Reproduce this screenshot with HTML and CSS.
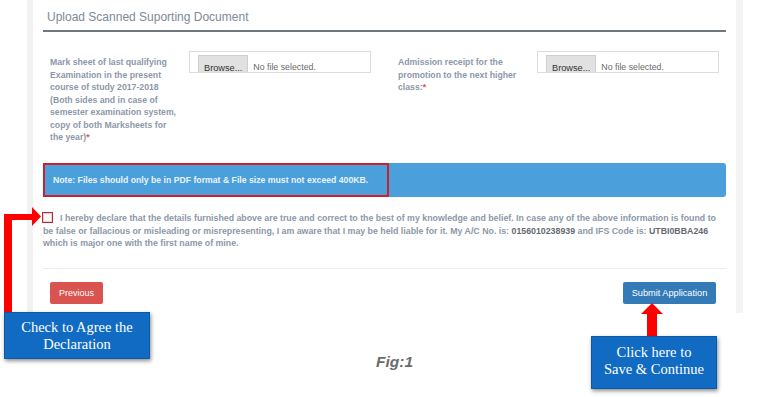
FILE: index.html
```html
<!DOCTYPE html>
<html>
<head>
<meta charset="utf-8">
<link rel="stylesheet" href="styles.css">
</head>
<body>
<div class="page">
  <div class="panel">
    <h3 class="title">Upload Scanned Suporting Document</h3>
    <div class="row">
      <label class="lbl lbl1">Mark sheet of last qualifying<br>Examination in the present<br>course of study 2017-2018<br>(Both sides and in case of<br>semester examination system,<br>copy of both Marksheets for<br>the year)<span class="req">*</span></label>
      <div class="file"><span class="browse">Browse...</span><span class="nofile">No file selected.</span></div>
      <label class="lbl lbl2">Admission receipt for the<br>promotion to the next higher<br>class:<span class="req">*</span></label>
      <div class="file"><span class="browse">Browse...</span><span class="nofile">No file selected.</span></div>
    </div>
    <div class="note"><div class="note-hl">Note: Files should only be in PDF format &amp; File size must not exceed 400KB.</div></div>
    <div class="decl"><span class="chk"></span>I hereby declare that the details furnished above are true and correct to the best of my knowledge and belief. In case any of the above information is found to<br>be false or fallacious or misleading or misrepresenting, I am aware that I may be held liable for it. My A/C No. is: <b>0156010238939</b> and IFS Code is: <b>UTBI0BBA246</b><br>which is major one with the first name of mine.</div>
    <div class="sep"></div>
    <div class="actions">
      <button class="btn btn-prev">Previous</button>
      <button class="btn btn-submit">Submit Application</button>
    </div>
  </div>
  <div class="caption">Fig:1</div>

  <svg class="arrows" width="768" height="397" viewBox="0 0 768 397">
    <path d="M4 214 H32 V207 L41 216.5 L32 226 V220 H12 V312 H4 Z" fill="#ff0000"/>
    <path d="M652 303 L663 314 H657 V336 H647 V314 H641 Z" fill="#ff0000"/>
  </svg>
  <div class="callout callout-left">Check to Agree the<br>Declaration</div>
  <div class="callout callout-right">Click here to<br>Save &amp; Continue</div>
</div>
</body>
</html>
```

FILE: styles.css
```css
* { box-sizing: border-box; }
html, body { margin: 0; padding: 0; background: #ffffff; }
body { font-family: "Liberation Sans", Arial, sans-serif; }

.page {
  position: relative;
  width: 768px;
  height: 397px;
  overflow: hidden;
}

.panel {
  margin-left: 27px;
  width: 716px;
  height: 313px;
  border-left: 6px solid #f2f2f2;
  border-right: 7px solid #f4f4f4;
  padding: 0 10px;
  background: #ffffff;
}

.title {
  margin: 0;
  padding: 9px 0 5px 4px;
  font-size: 12px;
  line-height: 16px;
  font-weight: normal;
  color: #7d8a98;
  border-bottom: 2px solid #6e7881;
}

.row {
  display: flex;
  align-items: flex-start;
  margin-top: 19px;
  padding-left: 7px;
}

.lbl {
  display: block;
  padding-top: 5px;
  font-size: 8.7px;
  line-height: 12.5px;
  font-weight: bold;
  color: #8c98a9;
  white-space: nowrap;
}
.lbl1 { width: 126px; margin-right: 13px; }
.lbl2 { width: 135px; margin-left: 27px; margin-right: 4px; }
.req { color: #d9534f; }

.file {
  display: flex;
  width: 182px;
  height: 22px;
  border: 1px solid #dddddd;
  overflow: hidden;
  padding: 3px 0 0 8px;
  font-size: 8.8px;
}
.browse {
  display: block;
  height: 24px;
  line-height: 24px;
  padding: 0 5px;
  background: #e1e1e1;
  border: 1px solid #cfcfcf;
  color: #333333;
  font-size: 9.2px;
}
.nofile {
  display: block;
  height: 24px;
  line-height: 24px;
  padding-left: 5px;
  color: #6a6a6a;
}

.note {
  margin-top: 19.5px;
  height: 34px;
  background: #4ba0dc;
  border-radius: 3px;
}
.note-hl {
  width: 346px;
  height: 34px;
  border: 2px solid #c9222c;
  padding-left: 8px;
  line-height: 30px;
  font-size: 8.7px;
  font-weight: bold;
  color: #e9f3fb;
}

.decl {
  margin-top: 15px;
  font-size: 8.8px;
  line-height: 12.7px;
  font-weight: bold;
  color: #8c98a9;
  white-space: nowrap;
}
.decl b { color: #666a70; }
.chk {
  display: inline-block;
  width: 11px;
  height: 11px;
  border: 1.5px solid #c9222c;
  background: #fafafa;
  box-shadow: inset 0 0 0 1px #d6d6d6;
  vertical-align: -2px;
  margin-left: -1px;
  margin-right: 7px;
}

.sep {
  margin-top: 18px;
  border-top: 1px solid #ececec;
}

.actions {
  display: flex;
  justify-content: space-between;
  margin-top: 13px;
  padding: 0 10px 0 7px;
}
.btn {
  height: 22px;
  border: none;
  border-radius: 2px;
  color: #ffffff;
  font-family: "Liberation Sans", Arial, sans-serif;
  font-size: 9px;
  padding: 0;
}
.btn-prev { width: 53px; background: #d9534f; }
.btn-submit { width: 93px; background: #337ab7; font-size: 9.2px; }

.caption {
  margin-top: 40px;
  padding-left: 21px;
  text-align: center;
  font-size: 15.5px;
  line-height: 18px;
  font-weight: bold;
  font-style: italic;
  color: #6b6b6b;
}

.arrows {
  position: absolute;
  left: 0;
  top: 0;
  pointer-events: none;
}

.callout {
  position: absolute;
  background: #116bc3;
  border: 1px solid #0c5aa5;
  box-shadow: 1px 2px 4px rgba(0, 0, 0, 0.45);
  color: #ffffff;
  font-family: "Liberation Serif", "Times New Roman", serif;
  font-size: 14.5px;
  line-height: 17px;
  text-align: center;
}
.callout-left {
  left: 4px;
  top: 312px;
  width: 146px;
  height: 47px;
  padding-top: 6px;
}
.callout-right {
  left: 591px;
  top: 336px;
  width: 126px;
  height: 53px;
  padding-top: 7px;
}
```
